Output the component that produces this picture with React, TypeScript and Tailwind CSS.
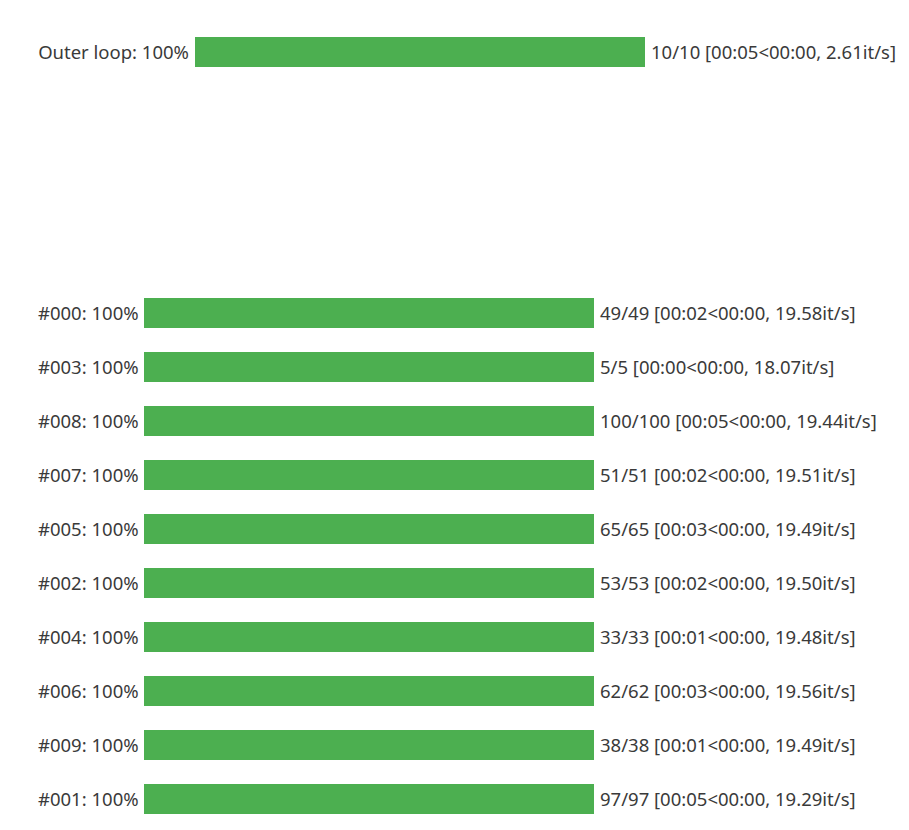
import React from "react";

const rows = [
  ["#000", "49/49 [00:02<00:00, 19.58it/s]"],
  ["#003", "5/5 [00:00<00:00, 18.07it/s]"],
  ["#008", "100/100 [00:05<00:00, 19.44it/s]"],
  ["#007", "51/51 [00:02<00:00, 19.51it/s]"],
  ["#005", "65/65 [00:03<00:00, 19.49it/s]"],
  ["#002", "53/53 [00:02<00:00, 19.50it/s]"],
  ["#004", "33/33 [00:01<00:00, 19.48it/s]"],
  ["#006", "62/62 [00:03<00:00, 19.56it/s]"],
  ["#009", "38/38 [00:01<00:00, 19.49it/s]"],
  ["#001", "97/97 [00:05<00:00, 19.29it/s]"],
];

function Row({ label, info, labelClass }: { label: string; info: string; labelClass: string }) {
  return (
    <div className="flex h-[30px] items-center gap-[6px]">
      <span className={`whitespace-nowrap text-right ${labelClass}`}>{label}</span>
      <div className="h-[30px] w-[450px] shrink-0 bg-[#4caf50]" />
      <span className="whitespace-nowrap">{info}</span>
    </div>
  );
}

export default function App() {
  return (
    <div
      className="min-h-[830px] w-[909px] bg-white pl-[38px] pt-[37px] text-[18.5px] text-[#3a3a3a]"
      style={{ fontFamily: '"Noto Sans", "Open Sans", sans-serif' }}
    >
      <Row label="Outer loop: 100%" info="10/10 [00:05<00:00, 2.61it/s]" labelClass="w-[151px]" />
      <div className="mt-[231px] flex flex-col gap-[24px]">
        {rows.map(([l, i]) => (
          <Row key={l} label={`${l}: 100%`} info={i} labelClass="w-[100px]" />
        ))}
      </div>
    </div>
  );
}
